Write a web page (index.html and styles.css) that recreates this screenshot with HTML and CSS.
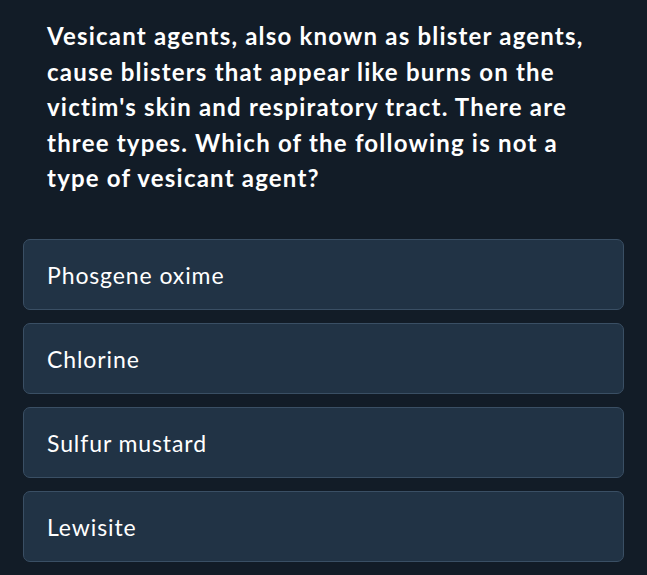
FILE: index.html
```html
<!DOCTYPE html>
<html lang="en">
<head>
    <meta charset="UTF-8">
    <meta name="viewport" content="width=device-width, initial-scale=1.0">
    <link rel="stylesheet" href="styles.css">
    <title>Quiz</title>
</head>

<body>
    <div class="quiz">
        <p class="question">Vesicant agents, also known as blister agents, cause blisters that appear like burns on the victim's skin and respiratory tract. There are three types. Which of the following is not a type of vesicant agent?</p>

        <div class="answers">
            <button type="button" class="answer">Phosgene oxime</button>
            <button type="button" class="answer">Chlorine</button>
            <button type="button" class="answer">Sulfur mustard</button>
            <button type="button" class="answer">Lewisite</button>
        </div>
    </div>
</body>

</html>
```

FILE: styles.css
```css
body {
    font-family: Lato, 'Noto Sans', sans-serif;
    margin: 0;
    padding: 0;
    background-color: #121c27;
    color: #ffffff;
}

.quiz {
    padding: 18px 23px 0 23px;
}

.question {
    margin: 0;
    padding: 0 24px;
    font-size: 24px;
    font-weight: 700;
    line-height: 35.5px;
    letter-spacing: 1.2px;
}

.answers {
    display: flex;
    flex-direction: column;
    gap: 13px;
    margin-top: 43px;
}

.answer {
    display: flex;
    align-items: center;
    height: 71px;
    box-sizing: border-box;
    padding: 2px 23px 0 23px;
    background-color: #213345;
    border: 1px solid #3a4f64;
    border-radius: 7px;
    color: #ffffff;
    font-family: inherit;
    font-size: 23px;
    font-weight: 400;
    letter-spacing: 0.9px;
    text-align: left;
    cursor: pointer;
}
```
